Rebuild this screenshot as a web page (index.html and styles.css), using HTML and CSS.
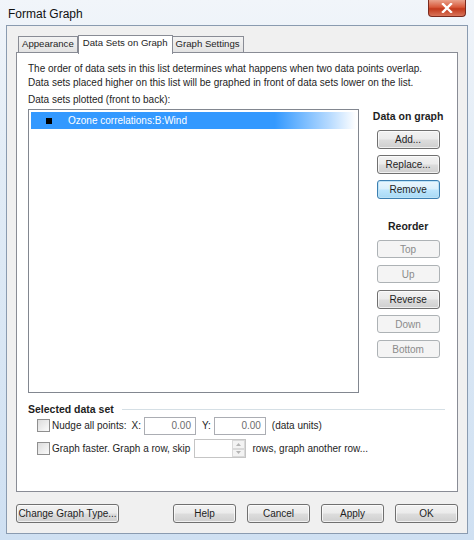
FILE: index.html
```html
<!DOCTYPE html>
<html>
<head>
    <title>Format Graph</title>
    <link rel="stylesheet" href="styles.css">
</head>
<body>
    <div class="window">
        <div class="titlebar">
            <span class="title">Format Graph</span>
            <div class="close">
                <svg width="12" height="10" viewBox="0 0 12 10">
                    <path d="M2 1 L10 9 M10 1 L2 9" stroke="#fff" stroke-width="2.4" stroke-linecap="square"/>
                </svg>
            </div>
        </div>
        <div class="client">
            <div class="tabs">
                <div class="tab">Appearance</div>
                <div class="tab active">Data Sets on Graph</div>
                <div class="tab">Graph Settings</div>
            </div>
            <div class="panel">
                <p class="intro">The order of data sets in this list determines what happens when two data points overlap.<br>Data sets placed higher on this list will be graphed in front of data sets lower on the list.</p>
                <div class="label">Data sets plotted (front to back):</div>
                <div class="main">
                    <div class="list">
                        <div class="row selected"><span class="marker"></span>Ozone correlations:B:Wind</div>
                    </div>
                    <div class="side">
                        <div class="side-title">Data on graph</div>
                        <button class="btn">Add...</button>
                        <button class="btn">Replace...</button>
                        <button class="btn focused">Remove</button>
                        <div class="side-title reorder">Reorder</div>
                        <button class="btn" disabled>Top</button>
                        <button class="btn" disabled>Up</button>
                        <button class="btn">Reverse</button>
                        <button class="btn" disabled>Down</button>
                        <button class="btn" disabled>Bottom</button>
                    </div>
                </div>
                <div class="group">
                    <span class="group-title">Selected data set</span>
                    <div class="rule"></div>
                </div>
                <div class="opt-row">
                    <span class="check"></span>
                    <span class="nudge-label">Nudge all points:</span>
                    <span class="axis">X:</span>
                    <div class="field">0.00</div>
                    <span class="axis">Y:</span>
                    <div class="field">0.00</div>
                    <span>(data units)</span>
                </div>
                <div class="opt-row">
                    <span class="check"></span>
                    <span class="skip-label">Graph faster. Graph a row, skip</span>
                    <div class="spinner">
                        <div class="spin-box"></div>
                        <div class="spin-arrows">
                            <div class="arrow"><svg width="5" height="3" viewBox="0 0 5 3"><path d="M0 3 L2.5 0 L5 3Z" fill="#b4b4b4"/></svg></div>
                            <div class="arrow"><svg width="5" height="3" viewBox="0 0 5 3"><path d="M0 0 L2.5 3 L5 0Z" fill="#b4b4b4"/></svg></div>
                        </div>
                    </div>
                    <span>rows, graph another row...</span>
                </div>
            </div>
            <div class="footer">
                <button class="btn wide">Change Graph Type...</button>
                <div class="spacer"></div>
                <button class="btn">Help</button>
                <button class="btn">Cancel</button>
                <button class="btn">Apply</button>
                <button class="btn">OK</button>
            </div>
        </div>
    </div>
</body>
</html>
```

FILE: styles.css
```css
body {
    margin: 0;
    font-family: "Liberation Sans", Arial, sans-serif;
    font-size: 10px;
    color: #1e1e1e;
}
.window {
    width: 474px;
    height: 540px;
    box-sizing: border-box;
    padding: 0 6px 6px 6px;
    background: linear-gradient(180deg, #f1f5fa 0%, #e2ecf6 30%, #cfe0f2 100%);
    display: flex;
    flex-direction: column;
}
.titlebar {
    height: 25px;
    display: flex;
    justify-content: space-between;
    align-items: flex-start;
}
.title {
    font-size: 12px;
    margin: 7px 0 0 2px;
    color: #111;
}
.close {
    width: 38px;
    height: 17px;
    margin-right: 2px;
    border: 1px solid #7a2a1e;
    border-top: none;
    border-radius: 0 0 4px 4px;
    background: linear-gradient(180deg, #eaa28c 0%, #d8593b 45%, #c2391c 55%, #d8745a 100%);
    display: flex;
    align-items: center;
    justify-content: center;
    box-sizing: border-box;
}
.client {
    flex: 1;
    background: #f0f0f0;
    border: 1px solid #8a9bb0;
    padding: 8px 9px 0 9px;
    display: flex;
    flex-direction: column;
}
.tabs {
    display: flex;
    align-items: flex-end;
    height: 19px;
    padding-left: 2px;
    position: relative;
    z-index: 1;
    font-size: 9.6px;
}
.tab {
    height: 14px;
    padding: 1px 3px 0 3px;
    border: 1px solid #898c95;
    border-bottom: none;
    background: linear-gradient(180deg, #f3f3f3, #e3e3e3);
    margin-bottom: 1px;
}
.tab + .tab {
    border-left: none;
}
.tab.active {
    height: 17px;
    background: #fff;
    border-left: 1px solid #898c95;
    margin-bottom: -1px;
    padding: 1px 4px 0 4px;
}
.tab.active + .tab {
    border-left: none;
}
.panel {
    height: 440px;
    background: #fff;
    border: 1px solid #898c95;
    padding: 9px 11px 0 11px;
    box-sizing: border-box;
    margin-top: -1px;
}
.intro {
    margin: 0;
    line-height: 14px;
}
.label {
    margin-top: 3px;
    line-height: 14px;
}
.main {
    display: flex;
    gap: 11px;
    margin-top: 2px;
}
.list {
    width: 332px;
    height: 284px;
    box-sizing: border-box;
    border: 1px solid #828790;
    padding: 2px 2px;
}
.row {
    height: 17px;
    display: flex;
    align-items: center;
    padding-left: 15px;
}
.row.selected {
    background: linear-gradient(90deg, #3399ff 0%, #3399ff 75%, #b8dbff 92%, #ffffff 100%);
    color: #fff;
}
.marker {
    width: 6px;
    height: 6px;
    background: #000;
    margin-right: 16px;
}
.side {
    width: 76px;
    display: flex;
    flex-direction: column;
    align-items: center;
}
.side-title {
    font-weight: bold;
    font-size: 10.5px;
    height: 14px;
    line-height: 14px;
    margin-bottom: 7px;
}
.side-title.reorder {
    margin-top: 14px;
}
.btn {
    font-family: inherit;
    font-size: 10px;
    color: #1e1e1e;
    width: 63px;
    height: 19px;
    padding: 0;
    border: 1px solid #707070;
    border-radius: 3px;
    background: linear-gradient(180deg, #f2f2f2 0%, #ebebeb 49%, #dddddd 51%, #cfcfcf 100%);
    box-shadow: inset 0 0 0 1px rgba(255, 255, 255, 0.7);
}
.side .btn {
    margin-bottom: 6px;
}
.side .btn[disabled] {
    height: 18px;
    margin-bottom: 7px;
    border-color: #adb2b5;
    background: #f4f4f4;
    color: #8b8b8b;
    box-shadow: none;
}
.btn.focused {
    border-color: #3c7fb1;
    background: linear-gradient(180deg, #eaf6fd 0%, #d9f0fc 49%, #bee6fd 51%, #a7d9f5 100%);
    box-shadow: inset 0 0 0 1px #bde3f7;
}
.group {
    display: flex;
    align-items: center;
    margin-top: 10px;
    padding-right: 1px;
}
.group-title {
    font-weight: bold;
    font-size: 10.5px;
    margin-right: 8px;
}
.rule {
    flex: 1;
    border-top: 1px solid #d5dfe5;
}
.opt-row {
    display: flex;
    align-items: center;
    height: 19px;
    padding-left: 9px;
    margin-top: 1px;
}
.opt-row + .opt-row {
    margin-top: 4px;
}
.check {
    width: 11px;
    height: 11px;
    border: 1px solid #8f8f8f;
    background: linear-gradient(135deg, #dcdcdc, #fbfbfb);
    margin-right: 2px;
}
.nudge-label {
    margin-right: 5px;
}
.axis {
    margin-right: 3px;
}
.field {
    width: 52px;
    height: 18px;
    box-sizing: border-box;
    border: 1px solid #abadb3;
    text-align: right;
    padding: 2px 4px 0 0;
    color: #6d6d6d;
    margin-right: 6px;
}
.skip-label {
    margin-right: 4px;
}
.spinner {
    display: flex;
    width: 52px;
    height: 19px;
    box-sizing: border-box;
    border: 1px solid #c5c5c5;
    margin-right: 6px;
}
.spin-box {
    flex: 1;
}
.spin-arrows {
    width: 13px;
    display: flex;
    flex-direction: column;
}
.arrow {
    flex: 1;
    border: 1px solid #d9d9d9;
    background: #f3f3f3;
    display: flex;
    align-items: center;
    justify-content: center;
}
.footer {
    display: flex;
    gap: 11px;
    margin-top: 12px;
}
.footer .btn.wide {
    width: 103px;
}
.spacer {
    flex: 1;
}
```
